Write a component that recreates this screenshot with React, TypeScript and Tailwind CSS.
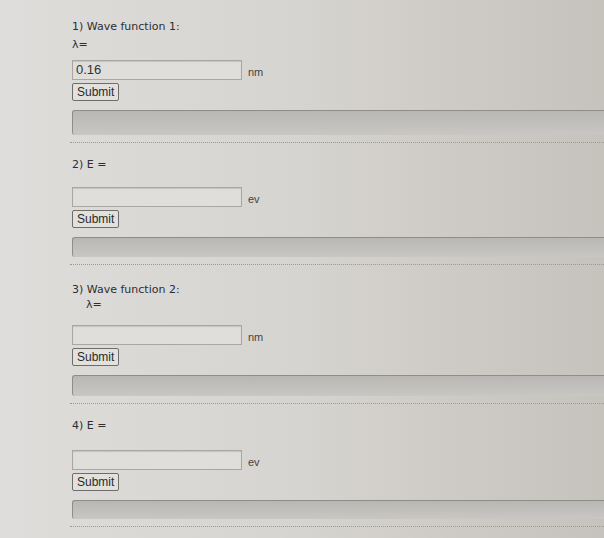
import React from "react";

type Q = {
  title: string;
  sub?: string;
  subClass?: string;
  value?: string;
  unit: string;
  top: string;
  inputTop: string;
  barH: string;
};

const questions: Q[] = [
  { title: "1) Wave function 1:", sub: "λ=", subClass: "mt-[3px] pl-0", value: "0.16", unit: "nm", top: "pt-[19px]", inputTop: "mt-[8px]", barH: "h-[25px]" },
  { title: "2) E =", unit: "ev", top: "pt-[14px]", inputTop: "mt-[15px]", barH: "h-[20px]" },
  { title: "3) Wave function 2:", sub: "λ=", subClass: "mt-0 pl-[14px]", unit: "nm", top: "pt-[17px]", inputTop: "mt-[13px]", barH: "h-[21px]" },
  { title: "4) E =", unit: "ev", top: "pt-[14px]", inputTop: "mt-[17px]", barH: "h-[19px]" },
];

function Question({ q }: { q: Q }) {
  return (
    <div className={q.top}>
      <div className="pl-[72px]">
        <p className="text-[11px] leading-[15px] text-[#2e2e2e]" style={{ fontFamily: '"DejaVu Sans", sans-serif' }}>
          {q.title}
        </p>
        {q.sub && (
          <p className={`${q.subClass} text-[11px] leading-[15px] text-[#2e2e2e]`} style={{ fontFamily: '"DejaVu Sans", sans-serif' }}>
            {q.sub}
          </p>
        )}
        <div className={`${q.inputTop} flex items-end gap-[6px]`}>
          <div className="flex h-[20px] w-[170px] items-center border border-[#a9a7a3] bg-[#dfdedb] px-[3px] text-[13px] text-[#333] shadow-[inset_0_1px_1px_rgba(0,0,0,0.12)]">
            {q.value}
          </div>
          <span className="pb-[2px] text-[11px] leading-none text-[#444]">{q.unit}</span>
        </div>
        <button className="mt-[3px] flex h-[18px] items-center rounded-[2px] border border-[#6f6d6a] bg-[#e2e1de] px-[4px] text-[12px] leading-none text-[#2a2a2a]">
          Submit
        </button>
      </div>
      <div className={`ml-[72px] mt-[9px] ${q.barH} rounded-l-[3px] border-t border-l border-[#8f8d89] bg-gradient-to-b from-[#b9b7b3] to-[#c9c7c3]`} />
      <div className="ml-[70px] mt-[7px] border-t border-dotted border-[#9c9a96]" />
    </div>
  );
}

export default function App() {
  return (
    <div
      className="h-[538px] w-[604px] overflow-hidden bg-gradient-to-r from-[#dedddb] via-[#d6d4d0] to-[#c6c2bc]"
      style={{ fontFamily: '"Liberation Sans", Arial, sans-serif' }}
    >
      {questions.map((q) => (
        <Question key={q.title} q={q} />
      ))}
    </div>
  );
}
